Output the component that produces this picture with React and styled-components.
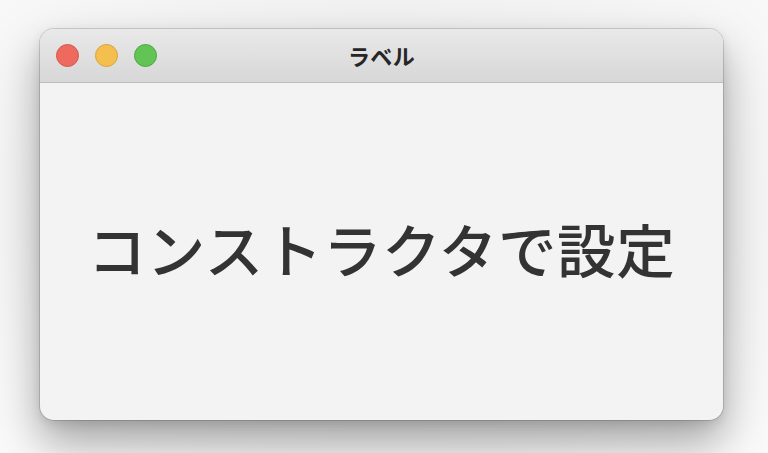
import React from "react";
import styled, { createGlobalStyle } from "styled-components";

const GlobalStyle = createGlobalStyle`
  html, body {
    margin: 0;
    padding: 0;
    background: #f4f4f4;
    overflow: hidden;
  }
  body {
    font-family: "Noto Sans CJK JP", "Noto Sans", sans-serif;
  }
`;

const Desktop = styled.div`
  width: 768px;
  height: 453px;
  padding: 29px 0 0 40px;
  box-sizing: border-box;
  background: radial-gradient(ellipse at 50% 45%, #e6e6e6 0%, #f2f2f2 60%, #fafafa 100%);
`;

const Window = styled.div`
  width: 683px;
  height: 391px;
  border-radius: 14px;
  overflow: hidden;
  display: flex;
  flex-direction: column;
  background: #f3f3f3;
  box-shadow: 0 0 0 1px rgba(0, 0, 0, 0.14), 0 22px 44px rgba(0, 0, 0, 0.34),
    0 4px 12px rgba(0, 0, 0, 0.1);
`;

const TitleBar = styled.div`
  position: relative;
  height: 53px;
  flex-shrink: 0;
  display: flex;
  align-items: center;
  justify-content: center;
  background: linear-gradient(#e9e9e9, #d7d7d7);
  border-bottom: 1px solid #bdbdbd;
`;

const Lights = styled.div`
  position: absolute;
  left: 16px;
  top: 15px;
  display: flex;
  gap: 16px;
`;

const Light = styled.span`
  width: 23px;
  height: 23px;
  border-radius: 50%;
  box-sizing: border-box;
  background: ${(p) => p.color};
  border: 1px solid ${(p) => p.edge};
`;

const Title = styled.div`
  font-size: 22px;
  font-weight: 700;
  color: #262626;
  letter-spacing: 0.3px;
  line-height: 1;
  margin-top: -2px;
`;

const Content = styled.div`
  flex: 1;
  display: flex;
  align-items: center;
  justify-content: center;
`;

const Label = styled.div`
  font-size: 58.5px;
  font-weight: 500;
  line-height: 1;
  color: #333333;
  white-space: nowrap;
  letter-spacing: 0.6px;
  margin-top: -6px;
`;

const App = () => {
  return (
    <>
      <GlobalStyle />
      <Desktop>
        <Window>
          <TitleBar>
            <Lights>
              <Light color="#ee6a5f" edge="#d6564c" />
              <Light color="#f5bf4f" edge="#d9a23d" />
              <Light color="#61c454" edge="#4ea843" />
            </Lights>
            <Title>ラベル</Title>
          </TitleBar>
          <Content>
            <Label>コンストラクタで設定</Label>
          </Content>
        </Window>
      </Desktop>
    </>
  );
};

export default App;
